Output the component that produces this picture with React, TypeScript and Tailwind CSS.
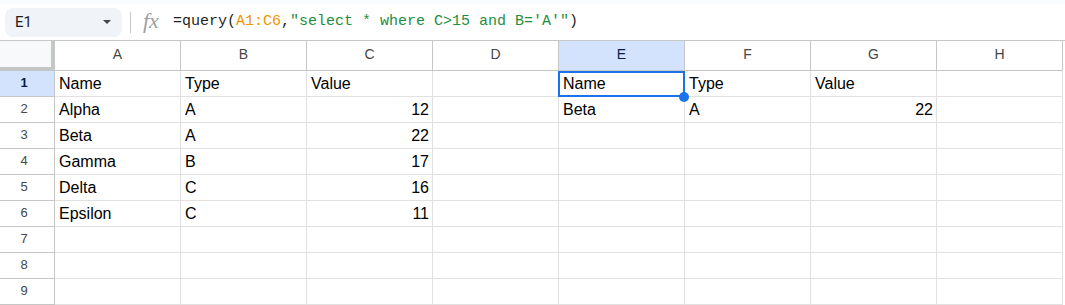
import React from "react";

const cols = ["A", "B", "C", "D", "E", "F", "G", "H"];

// each row: 8 cells, numbers get right aligned
const rows: (string | number)[][] = [
  ["Name", "Type", "Value", "", "Name", "Type", "Value", ""],
  ["Alpha", "A", 12, "", "Beta", "A", 22, ""],
  ["Beta", "A", 22, "", "", "", "", ""],
  ["Gamma", "B", 17, "", "", "", "", ""],
  ["Delta", "C", 16, "", "", "", "", ""],
  ["Epsilon", "C", 11, "", "", "", "", ""],
  ["", "", "", "", "", "", "", ""],
  ["", "", "", "", "", "", "", ""],
  ["", "", "", "", "", "", "", ""],
];

function FormulaBar() {
  return (
    <div className="h-[41px] border-t-[4px] border-t-[#f9fbfd] border-b border-b-[#c4c7c5] flex items-center pl-[5px] bg-white">
      <div className="w-[117px] h-[29px] rounded-[8px] bg-[#f0f4f9] flex items-center justify-between pl-[10px] pr-[11px]">
        <span className="text-[15px] text-[#1f1f1f]" style={{ fontFamily: "Roboto, 'Liberation Sans', sans-serif" }}>
          E1
        </span>
        <span className="w-0 h-0 border-l-[4px] border-r-[4px] border-t-[4px] border-l-transparent border-r-transparent border-t-[#444746]" />
      </div>
      <div className="ml-[8px] w-px h-[21px] bg-[#c4c7c5]" />
      <div className="ml-[12px] w-[30px] flex items-center">
        <span
          className="italic text-[22px] leading-none text-[#9aa0a6] -mt-[3px]"
          style={{ fontFamily: "'Liberation Serif', serif" }}
        >
          fx
        </span>
      </div>
      <div
        className="text-[15px] text-[#1f1f1f] whitespace-pre"
        style={{ fontFamily: "'Liberation Mono', monospace" }}
      >
        =query(<span className="text-[#f09300]">A1:C6</span>,
        <span className="text-[#1e8e3e]">"select * where C&gt;15 and B='A'"</span>)
      </div>
    </div>
  );
}

export default function App() {
  return (
    <div
      className="w-[1065px] h-[305px] overflow-hidden bg-white"
      style={{ fontFamily: "'Liberation Sans', Arial, sans-serif" }}
    >
      <FormulaBar />

      <div className="relative">
        {/* column headers */}
        <div className="flex">
          <div className="w-[55px] h-[30px] bg-[#f8f9fa] border-r-[4px] border-b-[4px] border-[#c4c7c5]" />
          {cols.map((c) => (
            <div
              key={c}
              className={
                c === "E"
                  ? "w-[126px] h-[30px] border-r border-b border-[#c4c7c5] bg-[#d3e3fd] flex items-center justify-center pb-[2px] text-[14px] text-[#041e49]"
                  : "w-[126px] h-[30px] border-r border-b border-[#c4c7c5] bg-white flex items-center justify-center pb-[2px] text-[14px] text-[#444746]"
              }
            >
              {c}
            </div>
          ))}
        </div>

        {/* rows */}
        {rows.map((row, i) => (
          <div key={i} className="flex">
            <div
              className={
                i === 0
                  ? "w-[55px] h-[26px] border-r border-b border-[#c4c7c5] bg-[#d3e3fd] flex items-center justify-center pr-[6px] pb-[1px] text-[13px] text-[#041e49] font-bold"
                  : "w-[55px] h-[26px] border-r border-b border-[#c4c7c5] bg-white flex items-center justify-center pr-[6px] pb-[1px] text-[13px] text-[#444746]"
              }
            >
              {i + 1}
            </div>
            {row.map((v, j) => (
              <div
                key={j}
                className={
                  typeof v === "number"
                    ? "w-[126px] h-[26px] border-r border-b border-[#e1e1e1] flex items-end justify-end pr-[3px] pb-[3px] text-[16px] leading-[18px] text-black"
                    : "w-[126px] h-[26px] border-r border-b border-[#e1e1e1] flex items-end pl-[4px] pb-[3px] text-[16px] leading-[18px] text-black"
                }
              >
                {v}
              </div>
            ))}
          </div>
        ))}

        {/* active cell E1 */}
        <div className="absolute left-[558px] top-[30px] w-[127px] h-[26px] border-2 border-[#1a73e8]" />
        <div className="absolute left-[679px] top-[51px] w-[10px] h-[10px] rounded-full bg-[#1a73e8]" />
      </div>
    </div>
  );
}
